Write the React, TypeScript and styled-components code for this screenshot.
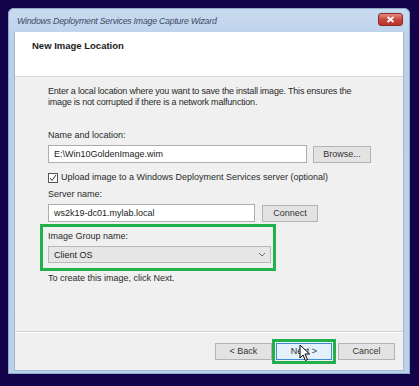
import React from "react";
import styled, { createGlobalStyle } from "styled-components";

const GlobalStyle = createGlobalStyle`
  html, body {
    margin: 0;
    padding: 0;
    background: #12034a;
  }
  body {
    font-family: "Liberation Sans", Arial, sans-serif;
  }
`;

const Screen = styled.div`
  width: 419px;
  height: 386px;
  padding: 8px;
  box-sizing: border-box;
  background: #12034a;
`;

const Window = styled.div`
  width: 402px;
  height: 366px;
  display: flex;
  flex-direction: column;
  background: linear-gradient(#c9dbf0, #b9cfea 40px, #bcd2ec);
  border-radius: 6px 6px 0 0;
  box-shadow: inset 0 0 0 1px #8ea8c8;
  padding: 0 6px 3px;
  box-sizing: border-box;
`;

const TitleBar = styled.div`
  height: 24px;
  display: flex;
  align-items: center;
  justify-content: space-between;
  padding-left: 3px;
  padding-top: 2px;
  box-sizing: border-box;
`;

const Title = styled.span`
  font-style: italic;
  font-size: 8.8px;
  letter-spacing: -0.25px;
  color: #3d4b64;
`;

const CloseButton = styled.div`
  width: 25px;
  height: 13px;
  margin-right: 1px;
  margin-top: -3px;
  border-radius: 3px;
  border: 1px solid #8a2a24;
  background: linear-gradient(#e48f84, #c9473c 50%, #b8352b);
  display: flex;
  align-items: center;
  justify-content: center;
  box-sizing: border-box;
`;

const Client = styled.div`
  flex: 1;
  display: flex;
  flex-direction: column;
  background: #f0f0f0;
  border: 1px solid #a6b8d0;
  border-top: none;
`;

const Header = styled.div`
  height: 45px;
  background: #ffffff;
  border-bottom: 1px solid #d6d6d6;
  padding: 8px 0 0 17px;
  box-sizing: border-box;
`;

const HeaderTitle = styled.div`
  font-weight: bold;
  font-size: 9.5px;
  color: #1a1a1a;
`;

const Body = styled.div`
  flex: 1;
  padding: 9px 0 0 33px;
  font-size: 9px;
  color: #2a2a2a;
  display: flex;
  flex-direction: column;
`;

const Intro = styled.p`
  margin: 0 0 22px;
  line-height: 11px;
  white-space: nowrap;
  letter-spacing: -0.2px;
`;

const Label = styled.div`
  line-height: 11px;
  margin-bottom: 4px;
`;

const Row = styled.div<{ $gap: number }>`
  display: flex;
  align-items: center;
  gap: ${({ $gap }) => $gap}px;
`;

const TextBox = styled.div<{ $w: number }>`
  width: ${({ $w }) => $w}px;
  height: 18px;
  box-sizing: border-box;
  border: 1px solid #abadb3;
  background: #ffffff;
  display: flex;
  align-items: center;
  padding-left: 5px;
  color: #222;
`;

const Button = styled.div<{ $w: number; $focus?: boolean }>`
  width: ${({ $w }) => $w}px;
  height: 17px;
  box-sizing: border-box;
  border: 1px solid ${({ $focus }) => ($focus ? "#3c8cd8" : "#b4b4b4")};
  background: ${({ $focus }) => ($focus ? "#e4f0fb" : "#e3e3e3")};
  display: flex;
  align-items: center;
  justify-content: center;
  color: #333;
`;

const CheckRow = styled.label`
  display: flex;
  align-items: center;
  gap: 3px;
  margin: 9px 0 6px;
  line-height: 11px;
`;

const CheckBox = styled.span`
  width: 10px;
  height: 10px;
  box-sizing: border-box;
  border: 1px solid #555;
  background: #fff;
  display: flex;
  align-items: center;
  justify-content: center;
`;

const Highlight = styled.div`
  width: 236px;
  margin: 2px 0 0 -8px;
  padding: 4px 5px 5px 5px;
  box-sizing: border-box;
  border: 3px solid #22b04c;
`;

const Select = styled.div`
  width: 223px;
  height: 17px;
  box-sizing: border-box;
  border: 1px solid #b9b9b9;
  background: #e6e6e6;
  display: flex;
  align-items: center;
  justify-content: space-between;
  padding: 0 4px 0 5px;
  color: #222;
`;

const Hint = styled.div`
  margin-top: 2px;
  line-height: 11px;
`;

const Footer = styled.div`
  height: 39px;
  border-top: 1px solid #d0d0d0;
  box-shadow: inset 0 1px 0 #ffffff;
  display: flex;
  align-items: center;
  justify-content: flex-end;
  padding-right: 8px;
  font-size: 9px;
  box-sizing: border-box;
`;

const NextWrap = styled.div`
  position: relative;
  border: 3px solid #22b04c;
  padding: 1px;
  margin: 0 2px 0 0;
`;

const Pointer = styled.svg`
  position: absolute;
  left: 24px;
  top: 2px;
`;

export default function App() {
  return (
    <>
      <GlobalStyle />
      <Screen>
        <Window>
          <TitleBar>
            <Title>Windows Deployment Services Image Capture Wizard</Title>
            <CloseButton>
              <svg width="9" height="7" viewBox="0 0 9 7">
                <path d="M1.5 1 L7.5 6 M7.5 1 L1.5 6" stroke="#ffffff" strokeWidth="1.8" />
              </svg>
            </CloseButton>
          </TitleBar>
          <Client>
            <Header>
              <HeaderTitle>New Image Location</HeaderTitle>
            </Header>
            <Body>
              <Intro>
                Enter a local location where you want to save the install image. This ensures the
                <br />
                image is not corrupted if there is a network malfunction.
              </Intro>
              <Label>Name and location:</Label>
              <Row $gap={6}>
                <TextBox $w={259}>E:\Win10GoldenImage.wim</TextBox>
                <Button $w={58}>Browse...</Button>
              </Row>
              <CheckRow>
                <CheckBox>
                  <svg width="8" height="8" viewBox="0 0 8 8">
                    <path d="M1 4 L3 6.5 L7 1" stroke="#333" strokeWidth="1" fill="none" />
                  </svg>
                </CheckBox>
                Upload image to a Windows Deployment Services server (optional)
              </CheckRow>
              <Label>Server name:</Label>
              <Row $gap={7}>
                <TextBox $w={207}>ws2k19-dc01.mylab.local</TextBox>
                <Button $w={56}>Connect</Button>
              </Row>
              <Highlight>
                <Label>Image Group name:</Label>
                <Select>
                  <span>Client OS</span>
                  <svg width="8" height="5" viewBox="0 0 8 5">
                    <path d="M1 1 L4 4 L7 1" stroke="#666" strokeWidth="1" fill="none" />
                  </svg>
                </Select>
              </Highlight>
              <Hint>To create this image, click Next.</Hint>
            </Body>
            <Footer>
              <Row $gap={0}>
                <Button $w={57}>&lt; Back</Button>
                <NextWrap>
                  <Button $w={56} $focus>Next &gt;</Button>
                  <Pointer width="12" height="18" viewBox="0 0 12 18">
                    <path
                      d="M1 1 L1 14 L4 11 L6.5 16.5 L8.5 15.5 L6 10 L10.5 10 Z"
                      fill="#ffffff"
                      stroke="#000000"
                      strokeWidth="1"
                      strokeLinejoin="round"
                    />
                  </Pointer>
                </NextWrap>
                <Button $w={57}>Cancel</Button>
              </Row>
            </Footer>
          </Client>
        </Window>
      </Screen>
    </>
  );
}
